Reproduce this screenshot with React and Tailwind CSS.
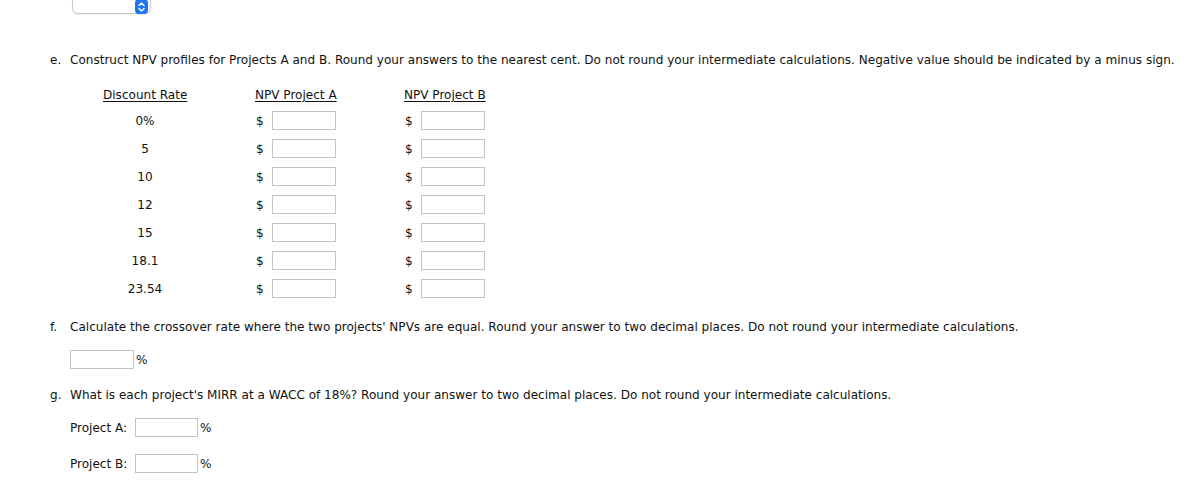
import React from 'react';

const rows = ['0%', '5', '10', '12', '15', '18.1', '23.54'];

function Box({ className = '' }) {
  return <input type="text" className={`h-[19px] border border-[#c4c4c4] bg-white outline-none ${className}`} />;
}

function Item({ mark, children }) {
  return (
    <div className="flex">
      <span className="w-5 shrink-0">{mark}</span>
      <span>{children}</span>
    </div>
  );
}

export default function App() {
  return (
    <div className="min-h-[490px] bg-white text-[12.05px] leading-4 text-[#111] font-['DejaVu_Sans',Verdana,sans-serif] whitespace-nowrap">
      <div className="ml-[72px] -mt-[10px] flex h-[24px] w-[79px] items-center justify-end rounded-md border border-[#c9c9c9] pr-[2px] shadow-[0_1px_1px_rgba(0,0,0,0.08)]">
        <span className="flex h-[15px] w-[13px] items-center justify-center rounded-[4px] bg-[#1f74f0] mt-[9px]">
          <svg width="7" height="10" viewBox="0 0 7 10" fill="none" stroke="white" strokeWidth="1.5" strokeLinecap="round" strokeLinejoin="round">
            <path d="M1 3.5 L3.5 1 L6 3.5" />
            <path d="M1 6.5 L3.5 9 L6 6.5" />
          </svg>
        </span>
      </div>

      <div className="pl-[50px] pt-[38px]">
        <Item mark="e.">
          Construct NPV profiles for Projects A and B. Round your answers to the nearest cent. Do not round your intermediate calculations. Negative value should be indicated by a minus sign.
        </Item>

        <div className="mt-[19px] ml-[53px] grid grid-cols-[84px_150px_150px]">
          <div className="text-center underline underline-offset-2">Discount Rate</div>
          <div className="ml-[68px] underline underline-offset-2">NPV Project A</div>
          <div className="ml-[67px] underline underline-offset-2">NPV Project B</div>
          {rows.map((r, i) => (
            <React.Fragment key={r}>
              <div className={`${i === 0 ? 'mt-[8px]' : 'mt-[9px]'} flex h-[19px] items-center justify-center`}>{r}</div>
              <div className={`${i === 0 ? 'mt-[8px]' : 'mt-[9px]'} ml-[69px] flex items-center`}>
                <span className="w-[16px]">$</span>
                <Box className="w-[64px]" />
              </div>
              <div className={`${i === 0 ? 'mt-[8px]' : 'mt-[9px]'} ml-[68px] flex items-center`}>
                <span className="w-[16px]">$</span>
                <Box className="w-[64px]" />
              </div>
            </React.Fragment>
          ))}
        </div>

        <div className="mt-[21px]">
          <Item mark="f.">
            Calculate the crossover rate where the two projects' NPVs are equal. Round your answer to two decimal places. Do not round your intermediate calculations.
          </Item>
        </div>
        <div className="mt-[15px] ml-[20px] flex items-center">
          <Box className="w-[64px]" />
          <span className="ml-[2px]">%</span>
        </div>

        <div className="mt-[18px]">
          <Item mark="g.">
            What is each project's MIRR at a WACC of 18%? Round your answer to two decimal places. Do not round your intermediate calculations.
          </Item>
        </div>
        <div className="mt-[15px] ml-[20px] flex items-center">
          <span className="w-[65px]">Project A:</span>
          <Box className="w-[63px]" />
          <span className="ml-[2px]">%</span>
        </div>
        <div className="mt-[17px] ml-[20px] flex items-center">
          <span className="w-[65px]">Project B:</span>
          <Box className="w-[63px]" />
          <span className="ml-[2px]">%</span>
        </div>
      </div>
    </div>
  );
}
